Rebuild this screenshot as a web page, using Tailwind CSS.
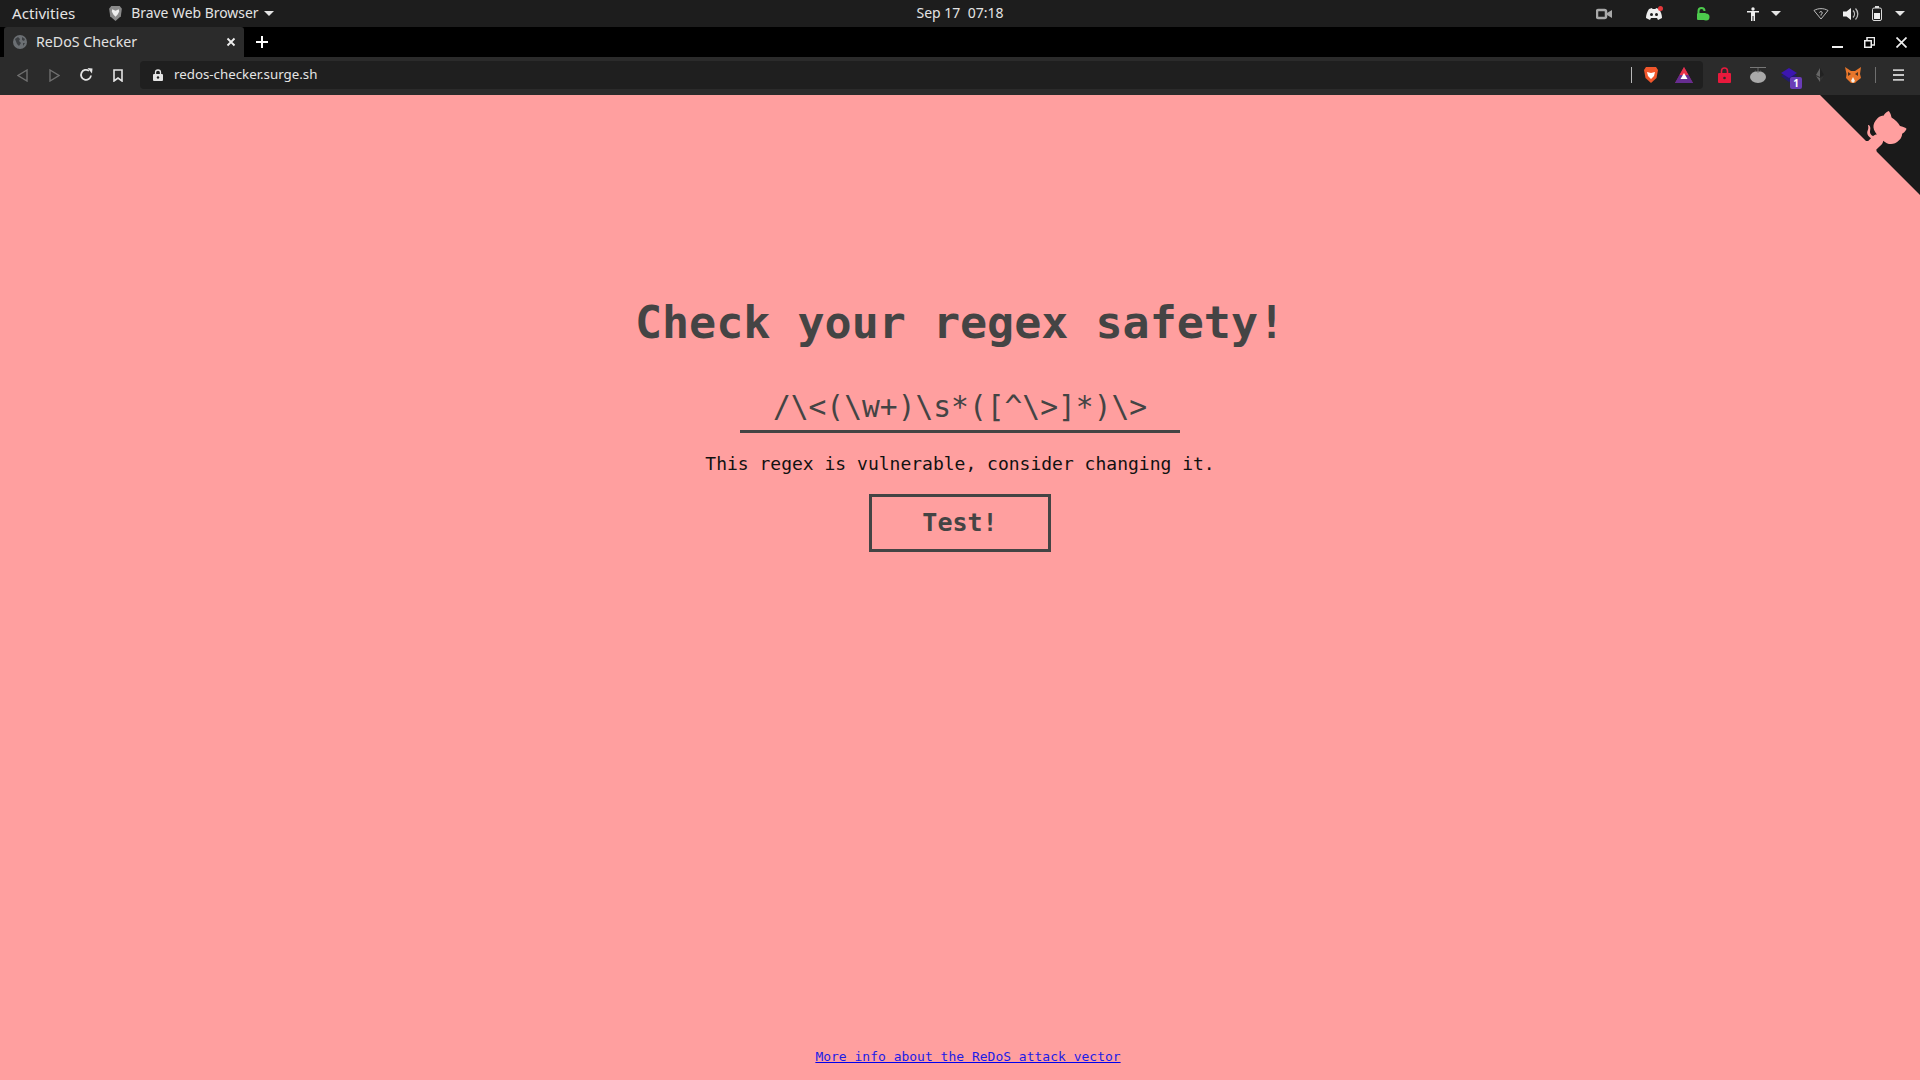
<!DOCTYPE html>
<html lang="en">
<head>
<meta charset="utf-8">
<title>ReDoS Checker</title>
<script src="https://cdn.jsdelivr.net/npm/@tailwindcss/browser@4"></script>
</head>
<body class="h-screen overflow-hidden flex flex-col bg-[#ff9f9f] font-['Noto_Sans',sans-serif]">

  <!-- Desktop top bar -->
  <div class="h-[27px] shrink-0 bg-[#1d1d1d] text-[#e4e4e4] text-[14px] grid grid-cols-[1fr_auto_1fr] items-center">
    <div class="flex items-center pl-[12px]">
      <span class="text-[15.200px]">Activities</span>
      <svg class="ml-[33px]" width="15" height="17" viewBox="0 0 14 16"><path d="M3 1h8l2 2.500-1 7-5 4.500-5-4.500-1-7z" fill="#8a8a8a"/><path d="M4 4l3 1.500L10 4l.5 2-1.500 3-2 2-2-2-1.500-3z" fill="#eee"/></svg>
      <span class="ml-[8px] text-[13.900px]">Brave Web Browser</span>
      <span class="ml-[6px] w-0 h-0 border-x-[5px] border-x-transparent border-t-[5px] border-t-[#e4e4e4]"></span>
    </div>
    <div class="text-[14px] -translate-y-px">Sep 17&nbsp; 07:18</div>
    <div class="flex items-center justify-end">
      <svg width="16" height="12" viewBox="0 0 16 12"><rect x="1" y="2" width="9" height="8" rx="1.500" fill="none" stroke="#a8a8a8" stroke-width="2.500"/><path d="M11 5l5-3v8l-5-3z" fill="#a8a8a8"/></svg>
      <span class="ml-[34px] relative">
        <svg class="block" width="16" height="12" viewBox="0 0 16 12"><path d="M3 1l3-1 .5 1h3L10 0l3 1c2 3 3 6 3 9l-4 2-1-2H5l-1 2-4-2c0-3 1-6 3-9z" fill="#eee"/><circle cx="5.500" cy="6.500" r="1.500" fill="#1d1d1d"/><circle cx="10.500" cy="6.500" r="1.500" fill="#1d1d1d"/></svg>
        <span class="absolute -top-[2px] -right-[1px] w-[5px] h-[5px] rounded-full bg-[#e5383b]"></span>
      </span>
      <svg class="ml-[34px]" width="14" height="14" viewBox="0 0 14 14"><path d="M2.500 6V4a3 3 0 0 1 6 0" fill="none" stroke="#4cc94c" stroke-width="2"/><rect x="1" y="6" width="9" height="7" rx="1" fill="#4cc94c"/><circle cx="10" cy="10" r="3.500" fill="#4cc94c"/></svg>
      <svg class="ml-[37px]" width="12" height="14" viewBox="0 0 12 14"><circle cx="6" cy="2" r="1.700" fill="#eee"/><path d="M0 4h12v1.500H8V14H6.500V9h-1v5H4V5.500H0z" fill="#eee"/></svg>
      <span class="ml-[12px] w-0 h-0 border-x-[5px] border-x-transparent border-t-[5px] border-t-[#e4e4e4]"></span>
      <svg class="ml-[32px]" width="16" height="12" viewBox="0 0 16 12"><path d="M1 2.500L8 11l7-8.500C11 0 5 0 1 2.500z" fill="none" stroke="#bbb" stroke-width="1"/><path d="M6.500 4.500C7 3 10 3.500 9 5.500 8.500 6 8 6.500 8 7.500" fill="none" stroke="#ddd" stroke-width="1"/></svg>
      <svg class="ml-[14px]" width="16" height="14" viewBox="0 0 16 14"><path d="M0 4.500h3.500L8 1v12L3.500 9.500H0z" fill="#eee"/><path d="M10 3.500c2 2 2 5 0 7M12.500 1.500c3 3 3 8 0 11" fill="none" stroke="#bbb" stroke-width="1.300"/></svg>
      <svg class="ml-[13px]" width="10" height="15" viewBox="0 0 10 15"><rect x=".5" y="2" width="9" height="12.500" rx="1.500" fill="none" stroke="#ddd"/><rect x="3" y="0" width="4" height="2" fill="#ddd"/><rect x="2" y="7" width="6" height="6" fill="#eee"/></svg>
      <span class="ml-[13px] mr-[15px] w-0 h-0 border-x-[5px] border-x-transparent border-t-[5px] border-t-[#e4e4e4]"></span>
    </div>
  </div>

  <!-- Tab strip -->
  <div class="h-[30px] shrink-0 bg-black flex items-end text-white">
    <div class="ml-[4px] w-[240px] h-[30px] bg-[#2b2b2b] rounded-t-[3px] flex items-center pl-[9px] pr-[8px] text-[14.200px] text-[#e2e2e2]">
      <svg width="14" height="14" viewBox="0 0 14 14"><circle cx="7" cy="7" r="7" fill="#6b6f73"/><path d="M2 4l3-2 2 2-1 2 2 2-2 3-2-2zM9 2l3 2-1 2-2-1zM10 8l2 0-2 3z" fill="#3c3f42"/></svg>
      <span class="ml-[9px] flex-1">ReDoS Checker</span>
      <svg width="10" height="10" viewBox="0 0 10 10"><path d="M1.500 1.500l7 7m0-7l-7 7" stroke="#eee" stroke-width="1.800"/></svg>
    </div>
    <svg class="ml-[12px] mb-[9px]" width="12" height="12" viewBox="0 0 12 12"><path d="M6 0v12M0 6h12" stroke="#fff" stroke-width="2"/></svg>
    <div class="ml-auto flex items-center h-[30px] pr-[13px] gap-[21px]">
      <svg width="11" height="11" viewBox="0 0 11 11"><rect y="9" width="11" height="2" fill="#eee"/></svg>
      <svg width="11" height="11" viewBox="0 0 11 11"><path d="M3 3V.5h7.500V8H8" fill="none" stroke="#eee" stroke-width="1.500"/><rect x=".75" y="3.750" width="6.500" height="6.500" fill="none" stroke="#eee" stroke-width="1.500"/></svg>
      <svg width="11" height="11" viewBox="0 0 11 11"><path d="M.5.500l10 10m0-10l-10 10" stroke="#eee" stroke-width="1.700"/></svg>
    </div>
  </div>

  <!-- Browser toolbar -->
  <div class="h-[38px] shrink-0 bg-[#2b2b2b] flex items-center pl-[17px] pb-[2px] text-[#e4e4e4]">
    <svg width="11" height="13" viewBox="0 0 11 13"><path d="M10 1L1 6.500l9 5.500z" fill="none" stroke="#6f6f6f" stroke-width="1.400"/></svg>
    <svg class="ml-[21px]" width="11" height="13" viewBox="0 0 11 13"><path d="M1 1l9 5.500-9 5.500z" fill="none" stroke="#6f6f6f" stroke-width="1.400"/></svg>
    <svg class="ml-[19px]" width="14" height="14" viewBox="0 0 14 14"><path d="M12 7.500A5 5 0 1 1 10 2.800" fill="none" stroke="#e4e4e4" stroke-width="1.800"/><path d="M8.500 0L13.500 0.500 13 5.500z" fill="#e4e4e4"/></svg>
    <svg class="ml-[20px]" width="10" height="13" viewBox="0 0 10 13"><path d="M1 1h8v11L5 9l-4 3z" fill="none" stroke="#e4e4e4" stroke-width="1.600"/></svg>
    <div class="ml-[17px] w-[1563px] h-[28px] rounded-[4px] bg-[#1f1f1f] flex items-center pl-[13px] pr-[10px]">
      <svg width="10" height="12" viewBox="0 0 10 12"><path d="M2.500 5V3.500a2.500 2.500 0 0 1 5 0V5" fill="none" stroke="#e4e4e4" stroke-width="1.300"/><rect y="5" width="10" height="7" rx="1" fill="#e4e4e4"/><circle cx="5" cy="8.500" r="1.200" fill="#1f1f1f"/></svg>
      <span class="ml-[11px] text-[13.300px]">redos-checker.surge.sh</span>
      <span class="ml-auto w-px h-[16px] bg-[#b8b8b8]"></span>
      <svg class="ml-[11px]" width="16" height="18" viewBox="0 0 16 18"><path d="M3 1h10l2 3-1.500 8L8 17l-5.500-5L1 4z" fill="#f0562b"/><path d="M4 6l4 1 4-1-1 4-3 3-3-3z" fill="#fff"/></svg>
      <svg class="ml-[16px]" width="18" height="16" viewBox="0 0 18 16"><path d="M9 0l9 16H0z" fill="#9e1f63"/><path d="M9 0l4.500 8h-9z" fill="#e8324a"/><path d="M0 16l4.500-8h9L18 16z" fill="#662d91"/><path d="M9 6l3.500 6h-7z" fill="#fff"/></svg>
    </div>
    <div class="flex-1 flex items-center pl-[15px]">
      <svg width="13" height="16" viewBox="0 0 13 16"><path d="M3.500 7V4a3 3 0 0 1 6 0v3" fill="none" stroke="#e8193c" stroke-width="1.600"/><rect y="6" width="13" height="10" rx="1" fill="#e8193c"/><circle cx="6.500" cy="11" r="1.300" fill="#2b2b2b"/></svg>
      <svg class="ml-[19px]" width="16" height="16" viewBox="0 0 16 16"><rect x="0" y="0" width="16" height="1" fill="#777"/><ellipse cx="8" cy="10" rx="8" ry="6" fill="#a9a9a9"/><path d="M8 1v4M5 4l3 1 3-1" fill="none" stroke="#666"/></svg>
      <span class="ml-[15px] relative w-[16px] h-[14px]">
        <svg class="block" width="16" height="14" viewBox="0 0 16 14"><path d="M0 8l8 6 8-6-8-5z" fill="#231a70"/><path d="M0 5l8-5 8 5-8 5z" fill="#3c16b0"/></svg>
        <span class="absolute -right-[5px] -bottom-[7px] w-[12px] h-[12px] rounded-[2px] bg-[#6a3cb8] text-white text-[10px] font-bold leading-[12px] text-center">1</span>
      </span>
      <svg class="ml-[19px]" width="8" height="14" viewBox="0 0 8 14"><path d="M4 0L0 7l4 2z" fill="#666"/><path d="M4 0l4 7-4 2z" fill="#222"/><path d="M0 8l4 6V10z" fill="#666"/><path d="M8 8l-4 6V10z" fill="#333"/></svg>
      <svg class="ml-[21px]" width="16" height="16" viewBox="0 0 16 16"><path d="M0 0l6 4h4l6-4-1 7 1 4-4 3-2 2H6l-2-2-3-3 .5-4z" fill="#e8762b"/><path d="M3 5l3 2-3 2zM13 5l-3 2 3 2z" fill="#4a3020"/><path d="M6 14l2-4 2 4-2 2z" fill="#f5f0e8"/></svg>
      <span class="ml-[14px] w-px h-[16px] bg-[#6f6f6f]"></span>
      <svg class="ml-[17px]" width="11" height="12" viewBox="0 0 11 12"><path d="M0 1.200h11M0 6h11M0 10.800h11" stroke="#c8c8c8" stroke-width="1.800"/></svg>
    </div>
  </div>

  <!-- Page -->
  <main class="relative flex-1 flex flex-col items-center font-['DejaVu_Sans_Mono',monospace] text-[#444]">
    <a class="absolute top-0 right-0" href="#" aria-label="View source">
      <svg class="block text-[#ff9f9f]" width="100" height="100" viewBox="0 0 250 250" fill="#1a1a1a">
        <path d="M0,0 L115,115 L130,115 L142,142 L250,250 L250,0 Z"/>
        <path d="M128.300,109.000 C113.800,99.700 119.000,89.600 119.000,89.600 C122.000,82.700 120.500,78.600 120.500,78.600 C119.200,72.000 123.400,76.300 123.400,76.300 C127.300,80.900 125.500,87.300 125.500,87.300 C122.900,97.600 130.600,101.900 134.400,103.200" fill="currentColor"/>
        <path d="M115.000,115.000 C114.900,115.100 118.700,116.500 119.800,115.400 L133.700,101.600 C136.900,99.200 139.900,98.400 142.200,98.600 C133.800,88.000 127.500,74.400 143.800,58.000 C148.500,53.400 154.000,51.200 159.700,51.000 C160.300,49.400 163.200,43.600 171.400,40.100 C171.400,40.100 176.100,42.500 178.800,56.200 C183.100,58.600 187.200,61.800 190.900,65.400 C194.500,69.000 197.700,73.200 200.100,77.600 C213.800,80.200 216.300,84.900 216.300,84.900 C212.700,93.100 206.900,96.000 205.400,96.600 C205.100,102.400 203.000,107.800 198.300,112.500 C181.900,128.900 168.300,122.500 157.700,114.100 C157.900,116.900 156.700,120.900 152.700,124.900 L141.000,136.500 C139.800,137.700 141.600,141.900 141.800,141.800 Z" fill="currentColor"/>
      </svg>
    </a>
    <h1 class="mt-[198px] text-[45px] leading-[60px] font-bold">Check your regex safety!</h1>
    <div class="mt-[31px] w-[440px] h-[49px] border-b-[3px] border-[#444] text-center text-[29.600px] leading-[46px]">/\&lt;(\w+)\s*([^\&gt;]*)\&gt;</div>
    <p class="mt-[19px] text-[18px] leading-[24px] text-[#111]">This regex is vulnerable, consider changing it.</p>
    <button class="mt-[18px] w-[182px] h-[58px] border-[3px] border-[#444] text-[25px] font-bold">Test!</button>
    <a class="mt-auto mb-[14px] ml-[16px] text-[13px] leading-[18px] text-[#1c1ce6] underline decoration-[#0000ee]" href="#">More info about the ReDoS attack vector</a>
  </main>
</body>
</html>
